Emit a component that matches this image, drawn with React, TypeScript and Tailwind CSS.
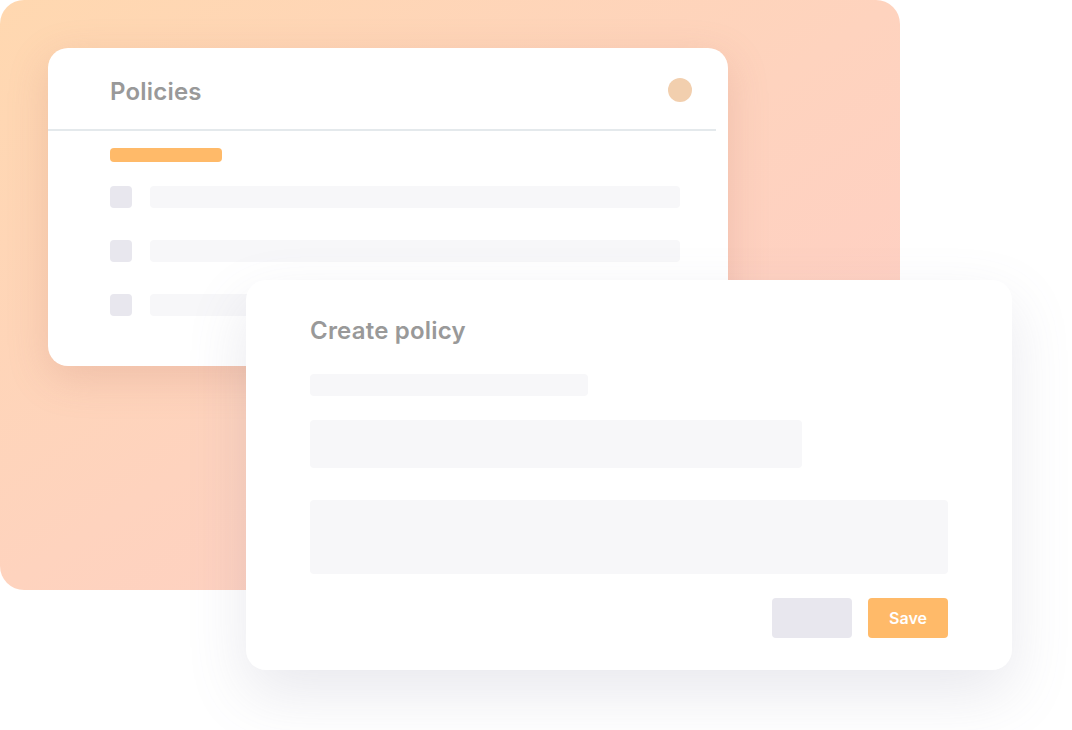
import React from 'react';

const ListRow = () => (
  <div className="flex items-center gap-[18px]">
    <div className="w-[22px] h-[22px] rounded-[4px] bg-[#e8e7ee]" />
    <div className="flex-1 h-[22px] rounded-[4px] bg-[#f7f7f9]" />
  </div>
);

export default function App() {
  return (
    <div
      className="relative w-[1072px] h-[730px] bg-white overflow-hidden"
      style={{ fontFamily: 'Inter, "Noto Sans", sans-serif' }}
    >
      {/* backdrop */}
      <div className="absolute left-0 top-0 w-[900px] h-[590px] rounded-[24px] bg-gradient-to-br from-[#ffd8b0] via-[#fed3be] to-[#ffcdc7]" />

      {/* policies window */}
      <div className="absolute left-[48px] top-[48px] w-[680px] h-[318px] rounded-[20px] bg-white shadow-[0_12px_40px_rgba(190,120,110,0.24)] flex flex-col">
        <div className="h-[81px] flex items-center justify-between pl-[62px] pr-[36px]">
          <span className="mt-[6px] text-[24px] leading-[28px] font-semibold tracking-[0.2px] text-[#999999]">Policies</span>
          <div className="w-[24px] h-[24px] rounded-full bg-[#f2cfae] mt-[2px]" />
        </div>
        <div className="h-[2px] mr-[12px] bg-[#e4e9ec]" />
        <div className="flex flex-col pl-[62px] pr-[48px] pt-[17px]">
          <div className="w-[112px] h-[14px] rounded-[4px] bg-[#ffba69]" />
          <div className="flex flex-col gap-[32px] mt-[24px]">
            <ListRow />
            <ListRow />
            <ListRow />
          </div>
        </div>
      </div>

      {/* create policy window */}
      <div className="absolute left-[246px] top-[280px] w-[766px] h-[390px] rounded-[20px] bg-white shadow-[0_24px_60px_rgba(120,120,150,0.16)] flex flex-col px-[64px] pt-[37px]">
        <span className="text-[24px] leading-[28px] font-semibold tracking-[0.2px] text-[#999999]">Create policy</span>
        <div className="mt-[29px] w-[278px] h-[22px] rounded-[4px] bg-[#f7f7f9]" />
        <div className="mt-[24px] w-[492px] h-[48px] rounded-[4px] bg-[#f7f7f9]" />
        <div className="mt-[32px] h-[74px] rounded-[4px] bg-[#f7f7f9]" />
        <div className="mt-[24px] flex justify-end gap-[16px]">
          <div className="w-[80px] h-[40px] rounded-[4px] bg-[#e8e7ee]" />
          <div className="w-[80px] h-[40px] rounded-[4px] bg-[#ffba69] flex items-center justify-center text-white text-[16px] font-semibold">
            Save
          </div>
        </div>
      </div>
    </div>
  );
}
